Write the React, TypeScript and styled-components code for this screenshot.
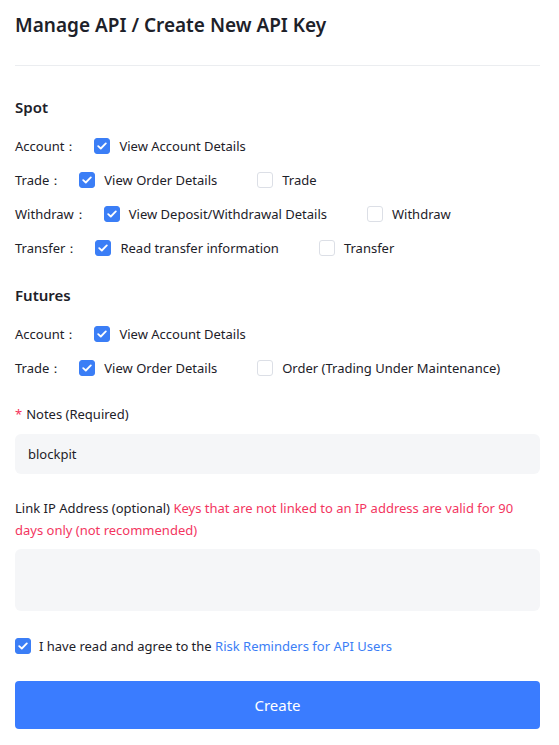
import React from "react";
import styled, { createGlobalStyle } from "styled-components";

const Global = createGlobalStyle`
  html, body { margin: 0; padding: 0; background: #fff; }
  body { font-family: "Noto Sans", "Open Sans", sans-serif; color: #1d2129; }
  * { box-sizing: border-box; }
`;

const Page = styled.div`
  width: 559px;
  padding: 0 19px 0 15px;
`;

const Title = styled.h1`
  margin: 0;
  height: 66px;
  padding-top: 11px;
  font-size: 19px;
  font-weight: 600;
  line-height: 28px;
  color: #1d2129;
  border-bottom: 1px solid #ebedf0;
`;

const SectionTitle = styled.h2<{ $top: number }>`
  margin: ${(p) => p.$top}px 0 0;
  font-size: 15px;
  font-weight: 600;
  line-height: 22px;
  color: #1d2129;
`;

const Rows = styled.div`
  display: flex;
  flex-direction: column;
  margin-top: 17px;
  gap: 12px;
`;

const Row = styled.div`
  display: flex;
  align-items: center;
  height: 22px;
  font-size: 13px;
  white-space: nowrap;
`;

const RowLabel = styled.span`
  margin-right: 17px;
  color: #1d2129;
  flex: none;
`;

const Option = styled.label`
  display: inline-flex;
  align-items: center;
  flex: none;
  gap: 9px;
  margin-right: 40px;
  color: #1d2129;
  font-size: 13px;
  &:last-child { margin-right: 0; }
`;

const Box = styled.span<{ $on: boolean }>`
  width: 16px;
  height: 16px;
  border-radius: 3px;
  flex: none;
  display: inline-flex;
  align-items: center;
  justify-content: center;
  background: ${(p) => (p.$on ? "#3b7ef6" : "#fff")};
  border: 1px solid ${(p) => (p.$on ? "#3b7ef6" : "#dcdfe6")};
`;

const FieldLabel = styled.div<{ $top: number }>`
  margin-top: ${(p) => p.$top}px;
  font-size: 13px;
  line-height: 22px;
  color: #1d2129;
`;

const Req = styled.span`
  color: #f5325c;
  margin-right: 4px;
`;

const Warn = styled.span`
  color: #f3365f;
`;

const Input = styled.div<{ $h: number; $top: number }>`
  margin-top: ${(p) => p.$top}px;
  height: ${(p) => p.$h}px;
  background: #f5f6f8;
  border-radius: 6px;
  padding: 0 13px;
  display: flex;
  align-items: center;
  font-size: 13px;
  color: #1d2129;
`;

const Agree = styled.div`
  margin-top: 24px;
  display: flex;
  align-items: center;
  gap: 8px;
  font-size: 13px;
  height: 22px;
`;

const Link = styled.span`
  color: #3b7ef6;
`;

const Button = styled.button`
  margin-top: 24px;
  width: 100%;
  height: 48px;
  border: none;
  border-radius: 4px;
  background: #3a7cff;
  color: #fff;
  font-family: inherit;
  font-size: 15px;
`;

const Check = ({ on }: { on: boolean }) => (
  <Box $on={on}>
    {on && (
      <svg width="10" height="8" viewBox="0 0 10 8">
        <path d="M1.2 4.1 L3.8 6.5 L8.8 1.4" fill="none" stroke="#fff" strokeWidth="1.8" strokeLinecap="round" strokeLinejoin="round" />
      </svg>
    )}
  </Box>
);

type Opt = { text: string; on: boolean };
const PermRow = ({ label, opts }: { label: string; opts: Opt[] }) => (
  <Row>
    <RowLabel>{label}：</RowLabel>
    {opts.map((o) => (
      <Option key={o.text}>
        <Check on={o.on} />
        {o.text}
      </Option>
    ))}
  </Row>
);

export default function App() {
  return (
    <Page>
      <Global />
      <Title>Manage API / Create New API Key</Title>
      <SectionTitle $top={30}>Spot</SectionTitle>
      <Rows>
        <PermRow label="Account" opts={[{ text: "View Account Details", on: true }]} />
        <PermRow label="Trade" opts={[{ text: "View Order Details", on: true }, { text: "Trade", on: false }]} />
        <PermRow label="Withdraw" opts={[{ text: "View Deposit/Withdrawal Details", on: true }, { text: "Withdraw", on: false }]} />
        <PermRow label="Transfer" opts={[{ text: "Read transfer information", on: true }, { text: "Transfer", on: false }]} />
      </Rows>
      <SectionTitle $top={25}>Futures</SectionTitle>
      <Rows>
        <PermRow label="Account" opts={[{ text: "View Account Details", on: true }]} />
        <PermRow label="Trade" opts={[{ text: "View Order Details", on: true }, { text: "Order (Trading Under Maintenance)", on: false }]} />
      </Rows>
      <FieldLabel $top={24}>
        <Req>*</Req>Notes (Required)
      </FieldLabel>
      <Input $h={40} $top={9}>blockpit</Input>
      <FieldLabel $top={23}>
        Link IP Address (optional) <Warn>Keys that are not linked to an IP address are valid for 90 days only (not recommended)</Warn>
      </FieldLabel>
      <Input $h={62} $top={8} />
      <Agree>
        <Check on={true} />
        <span>
          I have read and agree to the <Link>Risk Reminders for API Users</Link>
        </span>
      </Agree>
      <Button>Create</Button>
    </Page>
  );
}
